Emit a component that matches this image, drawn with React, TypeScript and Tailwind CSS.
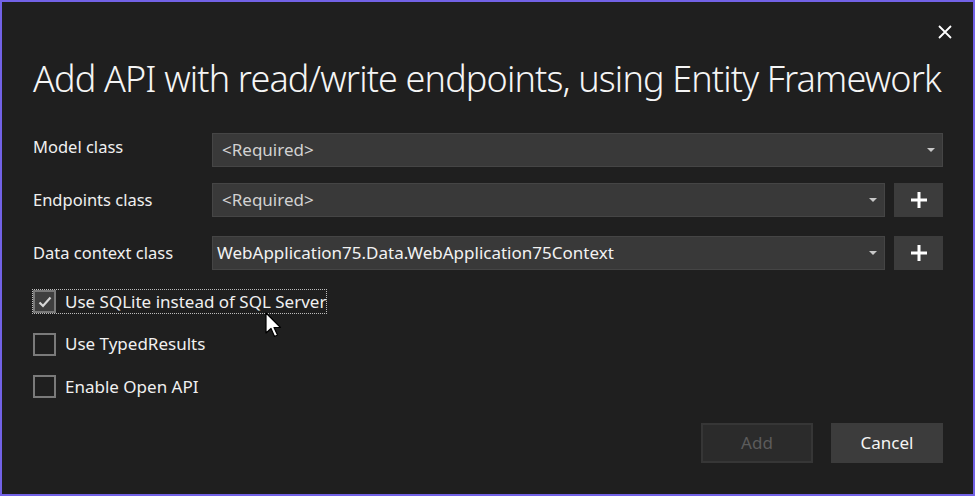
import React from "react";

const font = { fontFamily: '"Noto Sans", "Open Sans", sans-serif' };

function Caret() {
  return (
    <svg width="10" height="6" viewBox="0 0 10 6" className="shrink-0">
      <path d="M1 1 L9 1 L5 5 Z" fill="#c8c8c8" />
    </svg>
  );
}

function Combo({ text, dim, w }: { text: string; dim?: boolean; w: string }) {
  return (
    <div
      className={`${w} h-[34px] flex items-center justify-between bg-[#393939] border border-[#454545] pr-[6px] ${
        dim ? "pl-[9px]" : "pl-[4px]"
      }`}
    >
      <span className={`text-[17px] ${dim ? "text-[#d2d2d2]" : "text-[#f2f2f2]"}`}>{text}</span>
      <Caret />
    </div>
  );
}

function Plus() {
  return (
    <div className="w-[49px] h-[34px] bg-[#3c3c3c] flex items-center justify-center">
      <svg width="16" height="16" viewBox="0 0 16 16">
        <rect x="6.5" y="0" width="3" height="16" fill="#ffffff" />
        <rect x="0" y="6.5" width="16" height="3" fill="#ffffff" />
      </svg>
    </div>
  );
}

function Check({ checked, label, focus }: { checked?: boolean; label: string; focus?: boolean }) {
  return (
    <div
      className={`flex items-center h-[23px] w-fit ${
        focus ? "outline outline-1 outline-dotted outline-[#bdbdbd]" : ""
      }`}
    >
      <div
        className={`shrink-0 w-[23px] h-[23px] border-2 border-[#7a7a7a] flex items-center justify-center ${
          checked ? "bg-[#3f3f3f]" : ""
        }`}
      >
        {checked && (
          <svg width="14" height="12" viewBox="0 0 14 12">
            <path d="M1.5 6.5 L5 10 L12.5 1.5" stroke="#d8d8d8" strokeWidth="2.2" fill="none" />
          </svg>
        )}
      </div>
      <span className="ml-[9px] text-[17px] text-[#f0f0f0] whitespace-nowrap">{label}</span>
    </div>
  );
}

export default function App() {
  return (
    <div
      style={font}
      className="relative w-[975px] h-[496px] bg-[#1f1f1f] border-2 border-[#7262e6] overflow-hidden text-[#f0f0f0]"
    >
      <div className="flex justify-end pt-[23px] pr-[21px] h-[43px]">
        <svg width="14" height="14" viewBox="0 0 14 14">
          <path d="M1 1 L13 13 M13 1 L1 13" stroke="#ffffff" strokeWidth="1.8" />
        </svg>
      </div>
      <div className="pl-[31px] mt-[12px]">
        <h1 className="text-[36px] leading-[44px] font-light tracking-[-0.86px] whitespace-nowrap text-[#f5f5f5]">
          Add API with read/write endpoints, using Entity Framework
        </h1>
        <div className="mt-[32px] flex flex-col">
          <div className="flex items-center h-[34px]">
            <div className="w-[179px] text-[16.5px] -mt-[6px]">Model class</div>
            <Combo w="w-[731px]" text="<Required>" dim />
          </div>
          <div className="flex items-center h-[34px] mt-[16px]">
            <div className="w-[179px] text-[16.5px]">Endpoints class</div>
            <Combo w="w-[673px]" text="<Required>" dim />
            <div className="ml-[9px]">
              <Plus />
            </div>
          </div>
          <div className="flex items-center h-[34px] mt-[19px]">
            <div className="w-[179px] text-[16.5px]">Data context class</div>
            <Combo w="w-[673px]" text="WebApplication75.Data.WebApplication75Context" />
            <div className="ml-[9px]">
              <Plus />
            </div>
          </div>
        </div>
        <div className="mt-[20px] flex flex-col gap-[19.5px]">
          <Check checked focus label="Use SQLite instead of SQL Server" />
          <Check label="Use TypedResults" />
          <Check label="Enable Open API" />
        </div>
      </div>
      <div className="flex justify-end gap-[18px] pr-[30px] mt-[25px]">
        <button className="w-[112px] h-[40px] bg-[#2b2b2b] border-2 border-[#363636] text-[17px] text-[#5c5c5c]">
          Add
        </button>
        <button className="w-[112px] h-[40px] bg-[#3c3c3c] text-[17px] text-[#f5f5f5]">Cancel</button>
      </div>
      <svg
        className="absolute left-[263px] top-[310px]"
        width="18"
        height="28"
        viewBox="0 0 18 28"
      >
        <path
          d="M1 1 L1 21 L6 16.5 L9.5 24.5 L12.5 23 L9 15.5 L15.5 15.5 Z"
          fill="#ffffff"
          stroke="#000000"
          strokeWidth="1.2"
          strokeLinejoin="round"
        />
      </svg>
    </div>
  );
}
